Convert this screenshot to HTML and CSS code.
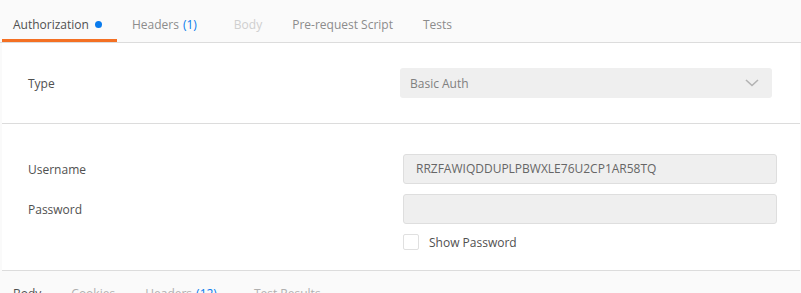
FILE: index.html
```html
<!DOCTYPE html>
<html lang="en">
<head>
  <meta charset="UTF-8">
  <meta name="viewport" content="width=device-width, initial-scale=1.0">
  <link rel="stylesheet" href="styles.css">
  <title>Authorization</title>
</head>
<body>
  <div class="tabs">
    <div class="tabs__tab tabs__tab--active">Authorization <span class="tabs__dot"></span></div>
    <div class="tabs__tab tabs__tab--headers">Headers <span class="tabs__count">(1)</span></div>
    <div class="tabs__tab tabs__tab--disabled">Body</div>
    <div class="tabs__tab">Pre-request Script</div>
    <div class="tabs__tab">Tests</div>
  </div>

  <div class="panel">
    <div class="section section--type">
      <div class="field__label">Type</div>
      <div class="select">
        <span>Basic Auth</span>
        <svg class="select__chevron" width="14" height="8" viewBox="0 0 14 8">
          <path d="M1 1 L7 6.5 L13 1" fill="none" stroke="#b3b3b3" stroke-width="1.6"/>
        </svg>
      </div>
    </div>

    <div class="section section--auth">
      <div class="field">
        <div class="field__label">Username</div>
        <div class="input">RRZFAWIQDDUPLPBWXLE76U2CP1AR58TQ</div>
      </div>
      <div class="field">
        <div class="field__label">Password</div>
        <div class="input"></div>
      </div>
      <div class="field">
        <div class="field__label"></div>
        <label class="checkbox"><span class="checkbox__box"></span>Show Password</label>
      </div>
    </div>
  </div>

  <div class="tabs tabs--bottom">
    <div class="tabs__tab tabs__tab--current">Body</div>
    <div class="tabs__tab">Cookies</div>
    <div class="tabs__tab tabs__tab--headers">Headers <span class="tabs__count">(12)</span></div>
    <div class="tabs__tab">Test Results</div>
  </div>
</body>
</html>
```

FILE: styles.css
```css
body {
  margin: 0;
  background: #fafafa;
  font-family: "Open Sans", "Liberation Sans", sans-serif;
  font-size: 12px;
  color: #505050;
}

.tabs {
  display: flex;
  height: 42px;
  padding-left: 2px;
  border-bottom: 1px solid #dcdcdc;
  background: #fafafa;
}

.tabs__tab {
  display: flex;
  align-items: center;
  padding: 9px 15px 3px;
  color: #8c8c8c;
  white-space: nowrap;
}

.tabs__tab:first-child {
  padding-left: 11px;
}

.tabs__tab--active {
  color: #505050;
  border-bottom: 3px solid #f47023;
  padding-bottom: 0;
}

.tabs__tab--headers {
  margin-right: 7px;
}

.tabs__tab--disabled {
  color: #cfcfcf;
}

.tabs__dot {
  display: inline-block;
  width: 7px;
  height: 7px;
  margin-left: 6px;
  border-radius: 50%;
  background: #097bed;
}

.tabs__count {
  margin-left: 4px;
  color: #097bed;
}

.panel {
  margin: 0 1px 0 2px;
  background: #fff;
}

.section {
  border-bottom: 1px solid #dcdcdc;
}

.section--type {
  display: flex;
  align-items: center;
  padding: 25px 28px 25px 26px;
}

.section--type .field__label {
  width: 372px;
}

.select {
  flex: 1;
  display: flex;
  align-items: center;
  justify-content: space-between;
  height: 30px;
  padding: 0 10px;
  border-radius: 3px;
  background: #efefef;
  color: #808080;
}

.select__chevron {
  margin-right: 3px;
}

.section--auth {
  display: flex;
  flex-direction: column;
  gap: 10px;
  padding: 30px 23px 20px 26px;
}

.field {
  display: flex;
  align-items: center;
}

.field__label {
  width: 375px;
  flex-shrink: 0;
}

.input {
  flex: 1;
  height: 28px;
  line-height: 28px;
  padding: 0 12px;
  border: 1px solid #dedede;
  border-radius: 3px;
  background: #efefef;
  color: #666;
}

.checkbox {
  display: flex;
  align-items: center;
  height: 16px;
  color: #505050;
}

.checkbox__box {
  width: 14px;
  height: 14px;
  margin-right: 10px;
  border: 1px solid #e0e0e0;
  border-radius: 2px;
  background: #fff;
}

.tabs--bottom {
  border-bottom: 0;
}

.tabs--bottom .tabs__tab {
  padding-top: 5px;
  color: #b0b0b0;
}

.tabs--bottom .tabs__tab--current {
  color: #505050;
}
```
